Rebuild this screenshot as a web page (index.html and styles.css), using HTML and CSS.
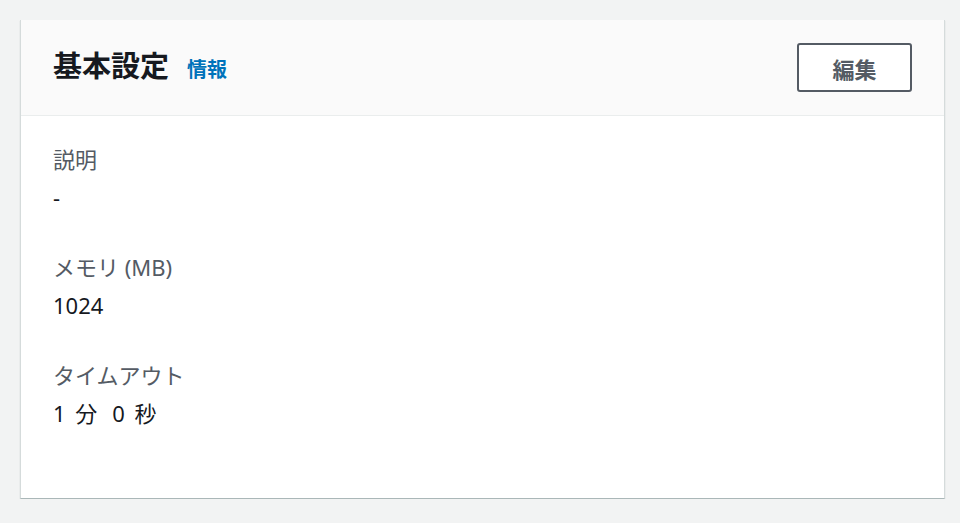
FILE: index.html
```html
<!DOCTYPE html>
<html lang="ja">
<head>
  <meta charset="UTF-8" />
  <meta name="viewport" content="width=device-width, initial-scale=1.0"/>
  <title>基本設定</title>
  <link rel="stylesheet" href="styles.css">
</head>
<body>
  <div class="panel">
    <!-- Header -->
    <div class="panel-header">
      <h2>基本設定<a class="info-link" href="#">情報</a></h2>
      <button class="edit-btn">編集</button>
    </div>

    <!-- Details -->
    <div class="panel-body">
      <div class="field">
        <div class="field-label">説明</div>
        <div class="field-value">-</div>
      </div>
      <div class="field">
        <div class="field-label">メモリ (MB)</div>
        <div class="field-value">1024</div>
      </div>
      <div class="field">
        <div class="field-label">タイムアウト</div>
        <div class="field-value time">
          <span>1 分</span>
          <span>0 秒</span>
        </div>
      </div>
    </div>
  </div>
</body>
</html>
```

FILE: styles.css
```css
body {
  margin: 0;
  padding: 20px 15px 0 20px;
  background: #f2f3f3;
  font-family: "Noto Sans", "Noto Sans CJK JP", sans-serif;
  color: #16191f;
}

.panel {
  background: #fff;
  height: 478px;
  border-left: 1px solid #d5dbdb;
  border-right: 1px solid #d5dbdb;
  border-bottom: 1px solid #aab7b8;
  box-shadow: 0 1px 1px 0 rgba(0, 28, 36, 0.2);
}

.panel-header {
  display: flex;
  justify-content: space-between;
  align-items: center;
  height: 95px;
  padding: 0 32px;
  background: #fafafa;
  border-bottom: 1px solid #eaeded;
}

h2 {
  margin: 0;
  font-size: 29px;
  font-weight: 700;
  line-height: 36px;
}

.info-link {
  margin-left: 18px;
  font-size: 20px;
  color: #0073bb;
  text-decoration: none;
}

.edit-btn {
  width: 115px;
  height: 49px;
  background: #fff;
  border: 2px solid #545b64;
  border-radius: 3px;
  color: #545b64;
  font-family: inherit;
  font-size: 22px;
  font-weight: 700;
  cursor: pointer;
}

.panel-body {
  display: flex;
  flex-direction: column;
  gap: 40px;
  padding: 28px 32px;
}

.field {
  display: flex;
  flex-direction: column;
  gap: 8px;
}

.field-label {
  font-size: 22px;
  line-height: 30px;
  color: #545b64;
}

.field-value {
  font-size: 22px;
  line-height: 30px;
}

.time {
  display: flex;
  gap: 15px;
  word-spacing: 4px;
}
```
